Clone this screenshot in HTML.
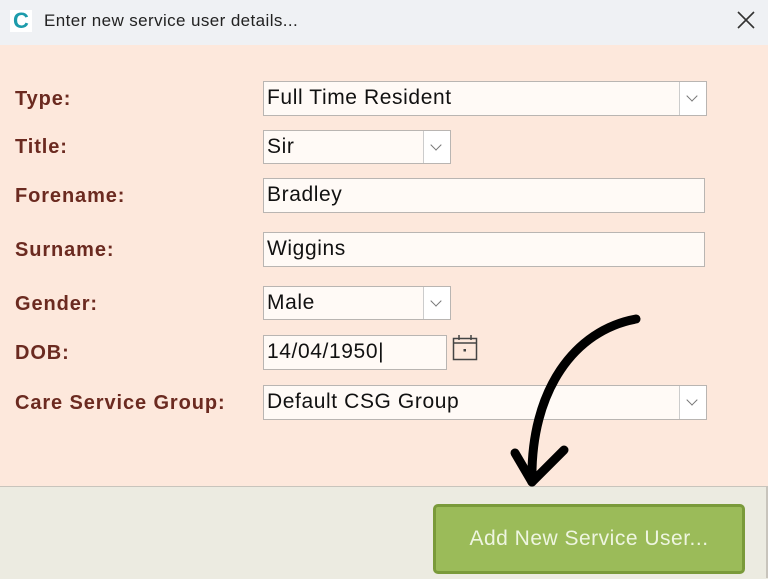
<!DOCTYPE html><html><head><style>
body{margin:0;width:768px;height:578px;overflow:hidden;font-family:"Liberation Sans",sans-serif;position:relative;background:#fde8dc}
.t{position:absolute;left:0;top:0;width:768px;height:45px;background:#eff1f4}
.ft{position:absolute;left:0;top:486px;width:768px;height:92px;background:#ecebe1;border-top:1px solid #c8c4bc}
.l{position:absolute;left:15px;font-weight:bold;font-size:20px;letter-spacing:0.9px;color:#6b2a20}
.f{position:absolute;left:263px;background:#fffaf6;border:1px solid #b9b5b2;box-sizing:border-box;font-size:21px;letter-spacing:0.6px;color:#111;padding-left:3px;line-height:32px}
.dd{position:absolute;right:0;top:0;bottom:0;width:26px;border-left:1px solid #ccc;background:#fff}
.dd:after{content:"";position:absolute;left:8px;top:10px;width:7px;height:7px;border-right:1.3px solid #777;border-bottom:1.3px solid #777;transform:rotate(45deg)}
.btn{position:absolute;left:433px;top:504px;width:312px;height:70px;box-sizing:border-box;background:#9bbb59;border:3px solid #7a9a3a;border-radius:5px;color:#eef5e0;font-size:21px;letter-spacing:0.5px;text-align:center;line-height:64px}
</style></head><body>
<div class="t">
<div style="position:absolute;left:10px;top:10px;width:22px;height:22px;background:#fff"><span style="position:absolute;left:3px;top:-2px;font-weight:bold;font-size:22px;color:#1c9bab">C</span></div>
<div style="position:absolute;left:44px;top:11px;font-size:17px;letter-spacing:0.4px;color:#222">Enter new service user details...</div>
<svg style="position:absolute;left:737px;top:11px" width="18" height="18"><path d="M1 1L17 17M17 1L1 17" stroke="#333" stroke-width="1.6"/></svg>
</div>
<div class="l" style="top:88px">Type:</div>
<div class="f" style="top:81px;width:444px;height:35px">Full Time Resident<div class="dd"></div></div>
<div class="l" style="top:136px">Title:</div>
<div class="f" style="top:130px;width:188px;height:34px">Sir<div class="dd"></div></div>
<div class="l" style="top:185px">Forename:</div>
<div class="f" style="top:178px;width:442px;height:35px">Bradley</div>
<div class="l" style="top:239px">Surname:</div>
<div class="f" style="top:232px;width:442px;height:35px">Wiggins</div>
<div class="l" style="top:293px">Gender:</div>
<div class="f" style="top:286px;width:188px;height:34px">Male<div class="dd"></div></div>
<div class="l" style="top:342px">DOB:</div>
<div class="f" style="top:335px;width:184px;height:35px">14/04/1950|</div>
<svg style="position:absolute;left:452px;top:334px" width="27" height="28"><rect x="1.5" y="4.5" width="23" height="21" fill="none" stroke="#444" stroke-width="1.5"/><line x1="1.5" y1="9" x2="24.5" y2="9" stroke="#444" stroke-width="1.5"/><line x1="7" y1="1" x2="7" y2="6" stroke="#444" stroke-width="1.5"/><line x1="19" y1="1" x2="19" y2="6" stroke="#444" stroke-width="1.5"/><rect x="11.5" y="15" width="2.5" height="2.5" fill="#444"/></svg>
<div class="l" style="top:392px">Care Service Group:</div>
<div class="f" style="top:385px;width:444px;height:35px">Default CSG Group<div class="dd"></div></div>
<div class="ft"></div>
<div style="position:absolute;left:766px;top:486px;width:2px;height:92px;background:#c8c4bc"></div>
<div class="btn">Add New Service User...</div>
<svg style="position:absolute;left:0;top:0" width="768" height="578"><path d="M636 319 C575 330 530 390 532 482" fill="none" stroke="#000" stroke-width="9" stroke-linecap="round"/><path d="M515 453 L532 482 L564 450" fill="none" stroke="#000" stroke-width="9" stroke-linecap="round" stroke-linejoin="round"/></svg>
</body></html>
